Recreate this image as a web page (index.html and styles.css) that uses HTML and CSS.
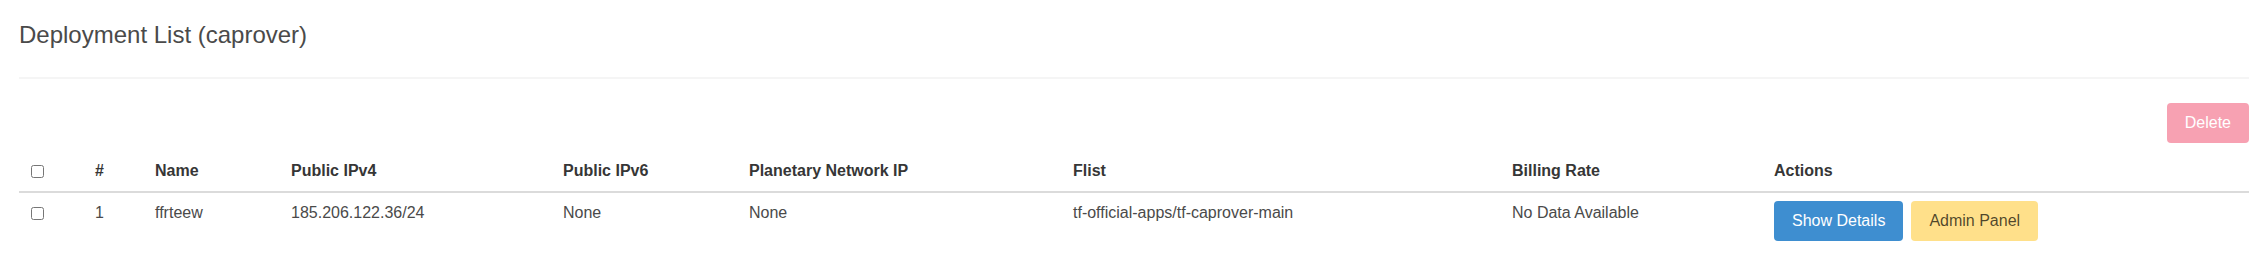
FILE: index.html
```html
<!DOCTYPE html>
<html lang="en">
<head>
<meta charset="utf-8">
<title>Deployment List (caprover)</title>
<link rel="stylesheet" href="styles.css">
</head>
<body>
<div class="page">
  <h1 class="title">Deployment List (caprover)</h1>
  <hr class="divider">
  <div class="toolbar">
    <button class="btn btn-danger" disabled>Delete</button>
  </div>
  <table class="table">
    <colgroup>
      <col class="col-cb">
      <col class="col-num">
      <col class="col-name">
      <col class="col-ipv4">
      <col class="col-ipv6">
      <col class="col-planet">
      <col class="col-flist">
      <col class="col-billing">
      <col class="col-actions">
    </colgroup>
    <thead>
      <tr>
        <th><input type="checkbox" class="cb"></th>
        <th>#</th>
        <th>Name</th>
        <th>Public IPv4</th>
        <th>Public IPv6</th>
        <th>Planetary Network IP</th>
        <th>Flist</th>
        <th>Billing Rate</th>
        <th>Actions</th>
      </tr>
    </thead>
    <tbody>
      <tr>
        <td><input type="checkbox" class="cb"></td>
        <td>1</td>
        <td>ffrteew</td>
        <td>185.206.122.36/24</td>
        <td>None</td>
        <td>None</td>
        <td>tf-official-apps/tf-caprover-main</td>
        <td>No Data Available</td>
        <td>
          <div class="actions">
            <button class="btn btn-info">Show Details</button>
            <button class="btn btn-warning">Admin Panel</button>
          </div>
        </td>
      </tr>
    </tbody>
  </table>
</div>
</body>
</html>
```
FILE: styles.css
```css
* { box-sizing: border-box; }
html, body {
  margin: 0;
  padding: 0;
  background: #ffffff;
}
body {
  font-family: "Liberation Sans", Arial, sans-serif;
  font-size: 16px;
  line-height: 1.5;
  color: #4a4a4a;
}
.page {
  padding: 21px 6px 0 19px;
}
.title {
  margin: 0 0 29px;
  font-size: 24px;
  line-height: 27px;
  font-weight: 400;
  color: #4a4a4a;
}
.divider {
  display: block;
  height: 2px;
  margin: 0 0 24px;
  border: 0;
  background: #f5f5f5;
}
.toolbar {
  display: flex;
  justify-content: flex-end;
  margin-bottom: 8px;
}
.btn {
  display: inline-flex;
  align-items: center;
  justify-content: center;
  height: 40px;
  padding: 0 17px;
  border: 1px solid transparent;
  border-radius: 4px;
  font-family: inherit;
  font-size: 16px;
  line-height: 1.5;
  white-space: nowrap;
  cursor: pointer;
}
.btn-danger {
  background: #f14668;
  color: #ffffff;
  opacity: 0.5;
  padding: 0 17px;
}
.btn-info {
  background: #3e8ed0;
  color: #ffffff;
}
.btn-warning {
  background: #ffe08a;
  color: rgba(0, 0, 0, 0.7);
}
.table {
  width: 2230px;
  table-layout: fixed;
  border-collapse: collapse;
  border-spacing: 0;
}
.col-cb { width: 64px; }
.col-num { width: 60px; }
.col-name { width: 136px; }
.col-ipv4 { width: 272px; }
.col-ipv6 { width: 186px; }
.col-planet { width: 324px; }
.col-flist { width: 439px; }
.col-billing { width: 262px; }
.col-actions { width: 487px; }
.table th,
.table td {
  padding: 8px 12px;
  text-align: left;
  vertical-align: top;
  white-space: nowrap;
}
.table th {
  font-weight: 700;
  color: #363636;
  border-bottom: 2px solid #dbdbdb;
}
.table td {
  color: #4a4a4a;
}
.cb {
  width: 13px;
  height: 13px;
  margin: 0;
  vertical-align: middle;
}
.actions {
  display: flex;
  gap: 8px;
}
```
